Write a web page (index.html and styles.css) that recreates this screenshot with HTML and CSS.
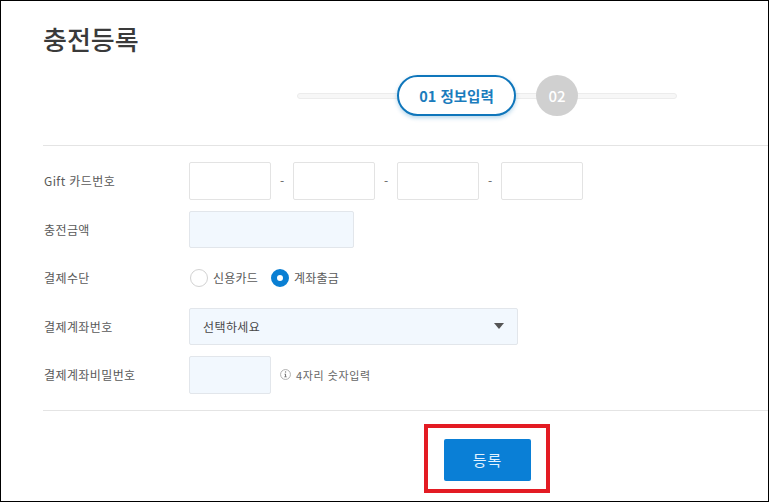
FILE: index.html
```html
<!DOCTYPE html>
<html lang="ko">
<head>
    <meta charset="UTF-8">
    <meta name="viewport" content="width=device-width, initial-scale=1.0">
    <title>충전등록</title>
    <link rel="stylesheet" href="styles.css">
</head>
<body>
    <div class="frame">
        <h1 class="page-title">충전등록</h1>

        <!-- 단계 표시 -->
        <div class="stepper">
            <div class="step-track">
                <div class="step-current">01 정보입력</div>
                <div class="step-next">02</div>
            </div>
        </div>

        <form class="charge-form">
            <div class="form-row">
                <label class="form-label">Gift 카드번호</label>
                <div class="card-inputs">
                    <input class="text-box box-card" type="text">
                    <span class="dash">-</span>
                    <input class="text-box box-card" type="text">
                    <span class="dash">-</span>
                    <input class="text-box box-card" type="text">
                    <span class="dash">-</span>
                    <input class="text-box box-card" type="text">
                </div>
            </div>
            <div class="form-row">
                <label class="form-label">충전금액</label>
                <input class="text-box box-tint box-amount" type="text">
            </div>
            <div class="form-row">
                <label class="form-label">결제수단</label>
                <div class="radio-group">
                    <span class="radio"></span>
                    <span class="radio-text">신용카드</span>
                    <span class="radio radio-on"></span>
                    <span class="radio-text">계좌출금</span>
                </div>
            </div>
            <div class="form-row">
                <label class="form-label">결제계좌번호</label>
                <div class="select-box">
                    <span>선택하세요</span>
                    <span class="select-arrow"></span>
                </div>
            </div>
            <div class="form-row">
                <label class="form-label">결제계좌비밀번호</label>
                <input class="text-box box-tint box-card" type="password">
                <div class="hint">
                    <svg class="hint-icon" viewBox="0 0 12 12" width="11" height="11">
                        <circle cx="6" cy="6" r="5.4" fill="none" stroke="#aaa" stroke-width="1"/>
                        <rect x="5.4" y="2.6" width="1.3" height="1.3" fill="#777"/>
                        <path d="M4.8 5.2h1.8v3h.8v.8H4.6v-.8h.9V6h-.7z" fill="#777"/>
                    </svg>
                    <span>4자리 숫자입력</span>
                </div>
            </div>
        </form>

        <div class="form-footer">
            <div class="mark-box">
                <button class="submit-btn" type="button">등록</button>
            </div>
        </div>
    </div>
</body>
</html>
```

FILE: styles.css
```css
html, body {
    margin: 0;
    height: 100%;
    overflow: hidden;
    background: #fff;
}
body {
    font-family: "Noto Sans CJK KR", "Noto Sans", sans-serif;
    color: #595959;
    font-size: 12px;
}
.frame {
    box-sizing: border-box;
    width: 769px;
    height: 502px;
    border: 1px solid #000;
    padding: 0 0 0 42px;
    overflow: hidden;
}
.page-title {
    margin: 19px 0 0;
    font-size: 26px;
    line-height: 38px;
    font-weight: 500;
    color: #3a3a3a;
}

/* 단계 표시 */
.stepper {
    margin-top: 17px;
    padding-left: 254px;
}
.step-track {
    position: relative;
    display: flex;
    align-items: center;
    gap: 20px;
    width: 380px;
    height: 41px;
    padding-left: 100px;
    box-sizing: border-box;
}
.step-track::before {
    content: "";
    position: absolute;
    left: 0;
    right: 0;
    top: 18px;
    box-sizing: border-box;
    height: 6px;
    border: 1px solid #ececec;
    border-radius: 3px;
    background: #f7f7f7;
}
.step-current, .step-next {
    position: relative;
}
.step-current {
    box-sizing: border-box;
    width: 119px;
    height: 41px;
    border: 2px solid #0f76bb;
    border-radius: 21px;
    background: #fff;
    box-shadow: 0 2px 4px rgba(15, 118, 187, 0.3);
    color: #1a7cbd;
    font-size: 14.5px;
    font-weight: 700;
    line-height: 37px;
    text-align: center;
}
.step-next {
    width: 42px;
    height: 41px;
    border-radius: 50%;
    background: #d0d0d0;
    color: #fff;
    font-size: 15px;
    font-weight: 500;
    line-height: 41px;
    text-align: center;
}

/* 입력 폼 */
.charge-form {
    margin-top: 29px;
    padding-top: 16px;
    padding-bottom: 16px;
    border-top: 1px solid #e4e4e4;
    border-bottom: 1px solid #e4e4e4;
    display: flex;
    flex-direction: column;
    gap: 11px;
}
.form-row {
    display: flex;
    align-items: center;
    height: 37.5px;
}
.form-label {
    width: 146px;
    flex: none;
    letter-spacing: 0.4px;
    padding-left: 1px;
    box-sizing: border-box;
}
.card-inputs {
    display: flex;
    align-items: center;
}
.dash {
    width: 22px;
    text-align: center;
    color: #666;
}
.text-box {
    box-sizing: border-box;
    height: 100%;
    margin: 0;
    padding: 0;
    border: 1px solid #e3e3e3;
    border-radius: 2px;
    background: #fff;
    outline: none;
}
.card-inputs, .card-inputs .text-box {
    height: 37.5px;
}
.box-card {
    width: 82px;
}
.box-amount {
    width: 165px;
}
.box-tint {
    background: #f2f8fe;
    border-color: #e2e6eb;
}
.radio-group {
    display: flex;
    align-items: center;
}
.radio {
    box-sizing: border-box;
    width: 18px;
    height: 18px;
    margin-left: 1px;
    border: 1px solid #d2d2d2;
    border-radius: 50%;
    background: #fff;
}
.radio-on {
    margin-left: 0;
    border: 6px solid #0a7fd3;
}
.radio-text {
    margin-left: 5px;
    margin-right: 13px;
    letter-spacing: 0.2px;
}
.select-box {
    box-sizing: border-box;
    width: 329px;
    height: 100%;
    padding: 0 13px;
    border: 1px solid #e2e6eb;
    border-radius: 2px;
    background: #f2f8fe;
    display: flex;
    align-items: center;
    justify-content: space-between;
    letter-spacing: 0.4px;
    color: #484848;
}
.select-arrow {
    width: 0;
    height: 0;
    border-left: 5.5px solid transparent;
    border-right: 5.5px solid transparent;
    border-top: 6px solid #555;
}
.hint {
    display: flex;
    align-items: center;
    gap: 5px;
    margin-left: 9px;
    font-size: 11px;
    color: #666;
    letter-spacing: 0.6px;
}
.hint-icon {
    flex: none;
}

/* 등록 버튼 */
.form-footer {
    padding-left: 381px;
    padding-top: 13px;
}
.mark-box {
    box-sizing: border-box;
    width: 126px;
    height: 69px;
    border: 4px solid #e31b23;
    padding: 11px 0 0 16px;
}
.submit-btn {
    display: block;
    width: 87px;
    height: 42px;
    padding: 0;
    border: none;
    border-radius: 2px;
    background: #0a7fd6;
    color: #e3f2ff;
    font-family: inherit;
    font-size: 15px;
    letter-spacing: 1px;
}
```
